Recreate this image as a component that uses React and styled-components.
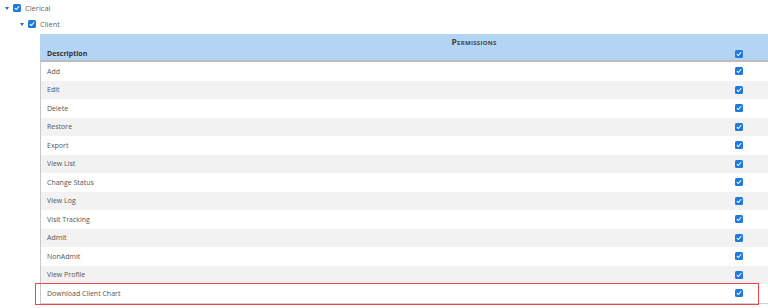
import React from 'react'
import styled, { createGlobalStyle } from 'styled-components'

const Global = createGlobalStyle`
  html, body {
    margin: 0;
    padding: 0;
    background: #fff;
    overflow: hidden;
  }
  body {
    font-family: "Open Sans", "Liberation Sans", sans-serif;
    font-size: 7px;
    color: #555;
  }
`;

const Page = styled.div`
  width: 768px;
  height: 308px;
  overflow: hidden;
`;

const Node = styled.div`
  display: flex;
  align-items: center;
  height: 16px;
  padding-left: ${p => p.$indent}px;
  gap: 4px;
  color: #666;
  font-size: 7.5px;
`;

const Caret = styled.span`
  width: 0;
  height: 0;
  border-left: 2.5px solid transparent;
  border-right: 2.5px solid transparent;
  border-top: 3px solid #2a6bb8;
`;

const Box = styled.span`
  display: inline-flex;
  align-items: center;
  justify-content: center;
  width: 8px;
  height: 8px;
  border-radius: 1.5px;
  background: #1f7ae0;
  flex: none;
`;

const Check = () => (
  <Box>
    <svg width="6" height="6" viewBox="0 0 10 10">
      <path d="M2 5.5 L4 7.5 L8.2 2.5" fill="none" stroke="#fff" strokeWidth="1.8" strokeLinecap="round" strokeLinejoin="round" />
    </svg>
  </Box>
);

const Table = styled.div`
  margin-left: 40px;
  margin-top: 2px;
  width: 860px;
`;

const Head = styled.div`
  background: #b3d4f2;
  height: 26px;
  display: grid;
  grid-template-columns: 695px 1fr;
  grid-template-rows: 13px 13px;
  border-bottom: 2px solid #bdbdbd;
`;

const Title = styled.div`
  grid-column: 1 / 3;
  text-align: center;
  font-variant: small-caps;
  font-weight: 700;
  font-size: 8.5px;
  color: #444;
  line-height: 13px;
  padding-top: 1px;
  padding-left: 8px;
  letter-spacing: 0.3px;
`;

const HeadLabel = styled.div`
  font-weight: 700;
  color: #333;
  padding-left: 7px;
  line-height: 13px;
  font-size: 7px;
`;

const CheckCell = styled.div`
  display: flex;
  align-items: center;
`;

const Body = styled.div`
  border-left: 1px solid #c8c8c8;
  border-bottom: 1px solid #d0d0d0;
`;

const Row = styled.div`
  position: relative;
  display: grid;
  grid-template-columns: 694px 1fr;
  height: 18.5px;
  align-items: center;
  background: ${p => (p.$odd ? '#f2f2f2' : '#fff')};

  ${p => p.$flag && `
    &::after {
      content: '';
      position: absolute;
      left: -6px;
      top: -1.5px;
      width: 722px;
      height: 20px;
      border: 1.5px solid #e8474c;
      pointer-events: none;
    }
  `}
`;

const Label = styled.div`
  padding-left: 6px;
  color: #555;
`;

const perms = [
  'Add', 'Edit', 'Delete', 'Restore', 'Export', 'View List', 'Change Status',
  'View Log', 'Visit Tracking', 'Admit', 'NonAdmit', 'View Profile', 'Download Client Chart',
];

export default function App() {
  return (
    <Page>
      <Global />
      <Node $indent={5}><Caret /><Check />Clerical</Node>
      <Node $indent={20}><Caret /><Check />Client</Node>
      <Table>
        <Head>
          <Title>Permissions</Title>
          <HeadLabel>Description</HeadLabel>
          <CheckCell><Check /></CheckCell>
        </Head>
        <Body>
          {perms.map((p, i) => (
            <Row key={p} $odd={i % 2 === 1} $flag={i === perms.length - 1}>
              <Label>{p}</Label>
              <CheckCell><Check /></CheckCell>
            </Row>
          ))}
        </Body>
      </Table>
    </Page>
  );
}
